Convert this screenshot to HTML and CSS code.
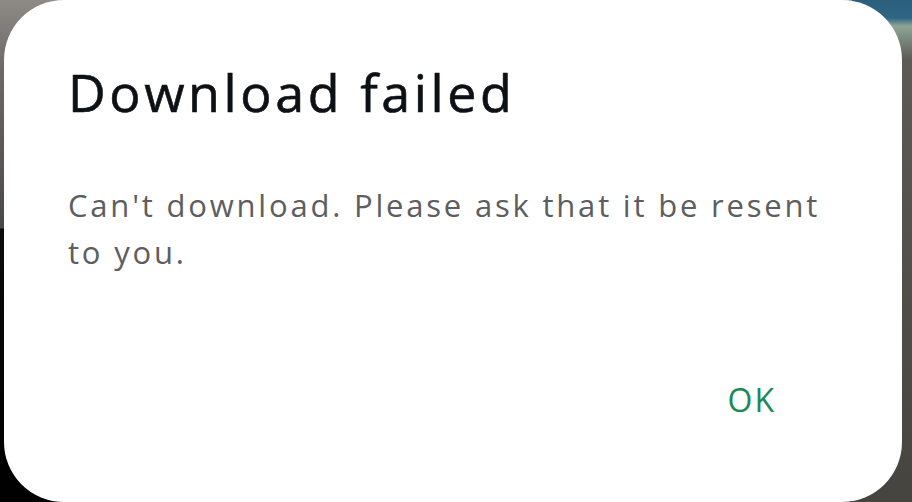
FILE: index.html
```html
<!DOCTYPE html>
<html lang="en">
<head>
    <meta charset="UTF-8">
    <meta name="viewport" content="width=device-width, initial-scale=1.0">
    <title>Download failed</title>
    <link rel="stylesheet" href="styles.css">
</head>
<body>
    <div class="screen">
        <div class="dialog">
            <h1 class="dialog-title">Download failed</h1>
            <p class="dialog-text">Can't download. Please ask that it be resent to you.</p>
            <div class="dialog-actions">
                <button type="button" class="dialog-btn">OK</button>
            </div>
        </div>
    </div>
</body>
</html>
```

FILE: styles.css
```css
html, body {
    margin: 0;
    height: 100%;
}

body {
    font-family: "Open Sans", "Noto Sans", sans-serif;
    overflow: hidden;
}

/* dimmed app behind the dialog */
.screen {
    height: 502px;
    box-sizing: border-box;
    padding: 0 10px 0 4px;
    background:
        linear-gradient(to bottom, #2d5e7e 0, #2f6584 18px, #8fa596 26px, #5b5a55 60px, #45443f 100%) right top / 60px 100% no-repeat,
        linear-gradient(to bottom, #8e8a86 0, #6c6966 70px, #4a4847 228px, #0c0a0a 229px, #000 100%) left top / 852px 100% no-repeat;
}

.dialog {
    height: 100%;
    background: #fff;
    border-radius: 60px;
    display: flex;
    flex-direction: column;
    padding: 0 0 0 64px;
    box-sizing: border-box;
}

.dialog-title {
    margin: 60px 0 0;
    font-size: 52px;
    font-weight: 500;
    line-height: 64px;
    letter-spacing: 3.6px;
    color: #0d1014;
    -webkit-text-stroke: 0.6px #0d1014;
}

.dialog-text {
    margin: 58px 60px 0 0;
    font-size: 31px;
    line-height: 47px;
    color: #5c5e60;
    letter-spacing: 2.8px;
}

.dialog-actions {
    display: flex;
    justify-content: flex-end;
    padding: 0 126px 0 0;
    margin-top: 102px;
}

.dialog-btn {
    background: none;
    border: none;
    padding: 0;
    font-family: inherit;
    font-size: 32px;
    letter-spacing: 2px;
    color: #1c8a57;
    cursor: pointer;
}
```
